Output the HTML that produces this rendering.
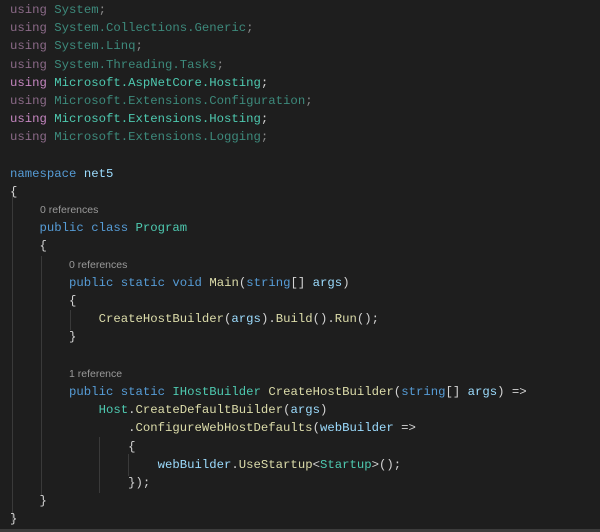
<!DOCTYPE html>
<html><head><style>
body{margin:0;background:#1e1e1e;width:600px;height:532px;overflow:hidden;position:relative}
.c{position:absolute;left:10px;top:1px;font-family:"Liberation Mono",monospace;font-size:12.3px;line-height:18.2px;color:#d4d4d4}
.l{height:18.2px;white-space:pre}
.lens{font-family:"Liberation Sans",sans-serif;font-size:10.5px;color:#9a9a9a}
.k{color:#569cd6}.ku{color:#c586c0}.kd{color:#8b6a88}.n{color:#4ec9b0}.nd{color:#3d8a7c}.pd{color:#8a8a8a}
.m{color:#dcdcaa}.p{color:#9cdcfe}.t{color:#4ec9b0}
.g{position:absolute;width:1px;background:#3a3a3a}
.bot{position:absolute;left:0;right:0;bottom:0;height:3px;background:#3c3c3c}
</style></head><body>
<div class="g" style="left:12px;top:192px;height:330px"></div>
<div class="g" style="left:41px;top:256px;height:240px"></div>
<div class="g" style="left:70px;top:310px;height:20px"></div>
<div class="g" style="left:99px;top:437px;height:56px"></div>
<div class="g" style="left:128px;top:454px;height:22px"></div>
<div class="c">
<div class="l"><span class="kd">using</span> <span class="nd">System</span><span class="pd">;</span></div>
<div class="l"><span class="kd">using</span> <span class="nd">System.Collections.Generic</span><span class="pd">;</span></div>
<div class="l"><span class="kd">using</span> <span class="nd">System.Linq</span><span class="pd">;</span></div>
<div class="l"><span class="kd">using</span> <span class="nd">System.Threading.Tasks</span><span class="pd">;</span></div>
<div class="l"><span class="ku">using</span> <span class="n">Microsoft.AspNetCore.Hosting</span>;</div>
<div class="l"><span class="kd">using</span> <span class="nd">Microsoft.Extensions.Configuration</span><span class="pd">;</span></div>
<div class="l"><span class="ku">using</span> <span class="n">Microsoft.Extensions.Hosting</span>;</div>
<div class="l"><span class="kd">using</span> <span class="nd">Microsoft.Extensions.Logging</span><span class="pd">;</span></div>
<div class="l"></div>
<div class="l"><span class="k">namespace</span> <span class="p">net5</span></div>
<div class="l">{</div>
<div class="l lens" style="padding-left:30px">0 references</div>
<div class="l">    <span class="k">public</span> <span class="k">class</span> <span class="t">Program</span></div>
<div class="l">    {</div>
<div class="l lens" style="padding-left:59px">0 references</div>
<div class="l">        <span class="k">public</span> <span class="k">static</span> <span class="k">void</span> <span class="m">Main</span>(<span class="k">string</span>[] <span class="p">args</span>)</div>
<div class="l">        {</div>
<div class="l">            <span class="m">CreateHostBuilder</span>(<span class="p">args</span>).<span class="m">Build</span>().<span class="m">Run</span>();</div>
<div class="l">        }</div>
<div class="l"></div>
<div class="l lens" style="padding-left:59px">1 reference</div>
<div class="l">        <span class="k">public</span> <span class="k">static</span> <span class="t">IHostBuilder</span> <span class="m">CreateHostBuilder</span>(<span class="k">string</span>[] <span class="p">args</span>) =&gt;</div>
<div class="l">            <span class="t">Host</span>.<span class="m">CreateDefaultBuilder</span>(<span class="p">args</span>)</div>
<div class="l">                .<span class="m">ConfigureWebHostDefaults</span>(<span class="p">webBuilder</span> =&gt;</div>
<div class="l">                {</div>
<div class="l">                    <span class="p">webBuilder</span>.<span class="m">UseStartup</span>&lt;<span class="t">Startup</span>&gt;();</div>
<div class="l">                });</div>
<div class="l">    }</div>
<div class="l">}</div>
</div>
<div class="bot"></div>
</body></html>
